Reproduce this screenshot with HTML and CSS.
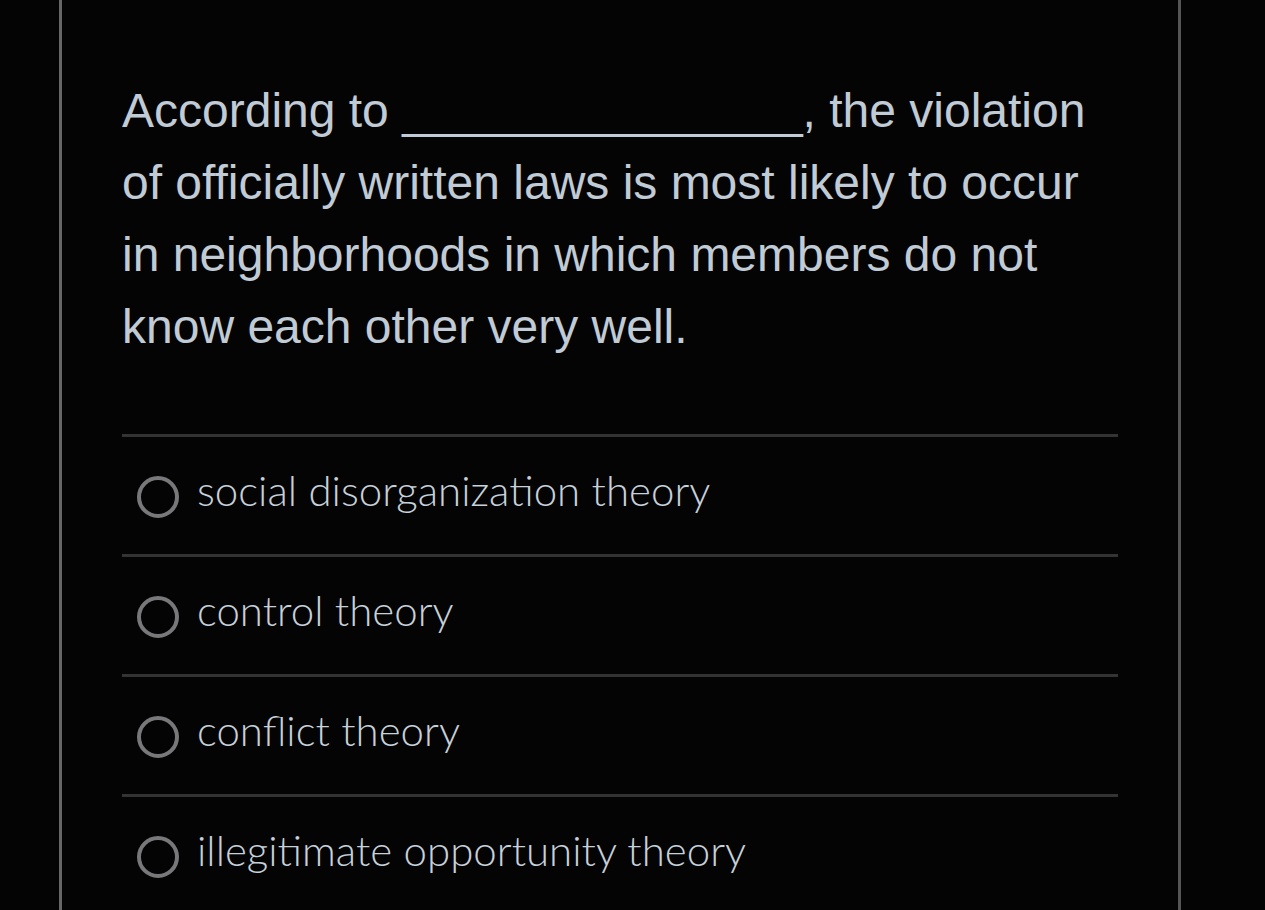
FILE: index.html
```html
<!DOCTYPE html>
<html lang="en">
<head>
<meta charset="utf-8">
<title>Question</title>
<link rel="stylesheet" href="styles.css">
</head>
<body>
<main class="panel">
  <p class="question">According to _______________, the violation of officially written laws is most likely to occur in neighborhoods in which members do not know each other very well.</p>
  <ul class="options">
    <li class="option"><span class="radio"></span><span class="label">social disorganization theory</span></li>
    <li class="option"><span class="radio"></span><span class="label">control theory</span></li>
    <li class="option"><span class="radio"></span><span class="label">conflict theory</span></li>
    <li class="option"><span class="radio"></span><span class="label">illegitimate opportunity theory</span></li>
  </ul>
</main>
</body>
</html>
```
FILE: styles.css
```css
html, body {
  margin: 0;
  padding: 0;
  background: #040404;
  height: 100%;
  overflow: hidden;
}
.panel {
  box-sizing: border-box;
  margin-left: 59px;
  width: 1122px;
  min-height: 100vh;
  border-left: 3px solid #666;
  border-right: 3px solid #555;
  padding: 75px 60px 0 60px;
}
.question {
  margin: 0;
  font-family: "Liberation Sans", Arial, sans-serif;
  font-size: 48px;
  line-height: 72px;
  color: #c0cbd5;
}
.options {
  list-style: none;
  margin: 71px 0 0 0;
  padding: 0;
  border-top: 3px solid #333;
}
.option {
  display: flex;
  align-items: center;
  height: 117px;
  border-bottom: 3px solid #333;
  padding-left: 15px;
  gap: 18px;
}
.radio {
  box-sizing: border-box;
  width: 42px;
  height: 42px;
  border: 4px solid #78787a;
  border-radius: 50%;
  flex: none;
  margin-top: 3px;
}
.label {
  font-family: Lato, "Open Sans", sans-serif;
  font-weight: 300;
  font-size: 42px;
  line-height: 50px;
  padding-bottom: 12px;
  color: #c6d1db;
}
```
